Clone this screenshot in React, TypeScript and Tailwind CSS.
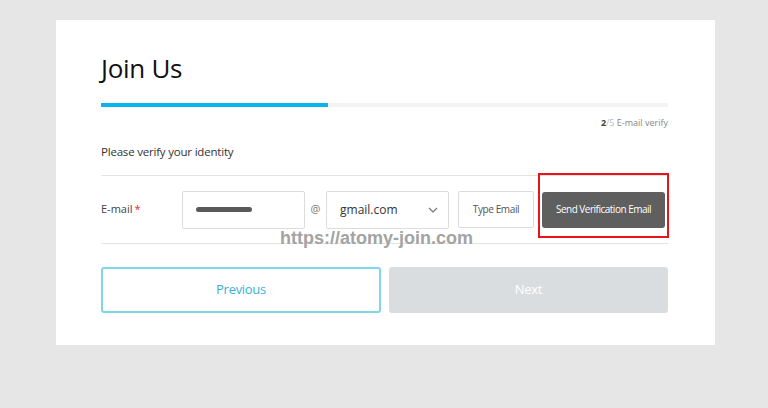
export default function App() {
  return (
    <div className="w-[768px] h-[408px] bg-[#e6e6e6] pt-[20px] pl-[56px] overflow-hidden" style={{ fontFamily: '"Open Sans", "Noto Sans", sans-serif' }}>
      <div className="w-[659px] h-[325px] bg-white pl-[45px] pr-[47px] pt-[30px]">
        <h1 className="text-[26px] leading-[36px] text-[#111] tracking-[-0.3px]">Join Us</h1>

        <div className="mt-[17px] h-[4px] bg-[#f3f3f3] flex">
          <div className="w-[227px] h-full bg-[#0ab4ee]" />
        </div>

        <div className="mt-[10px] text-right text-[9px] leading-[12px] text-[#888]">
          <span className="font-bold text-[#444]">2</span>
          <span className="text-[#bbb]">/5</span> E-mail verify
        </div>

        <p className="mt-[15px] text-[11.5px] leading-[16px] text-[#333] tracking-[-0.2px]">Please verify your identity</p>

        <div className="relative mt-[15px] border-t border-b border-[#e3e3e3] h-[69px] flex items-center">
          <div className="w-[81px] text-[11px] text-[#444]">
            E-mail<span className="text-[#e5262e] ml-[2px]">*</span>
          </div>
          <div className="w-[123px] h-[38px] border border-[#dcdcdc] rounded-[2px] flex items-center pl-[13px]">
            <div className="w-[56px] h-[5px] rounded-full bg-[#5a5a5a]" />
          </div>
          <div className="w-[21px] text-center text-[11px] text-[#777]">@</div>
          <div className="w-[123px] h-[38px] border border-[#dcdcdc] rounded-[2px] flex items-center justify-between pl-[13px] pr-[10px] text-[12px] text-[#333]">
            gmail.com
            <svg width="10" height="6" viewBox="0 0 10 6" fill="none" stroke="#777" strokeWidth="1.2">
              <path d="M1 1l4 4 4-4" />
            </svg>
          </div>
          <div className="ml-[9px] w-[76px] h-[37px] border border-[#dcdcdc] rounded-[2px] flex items-center justify-center text-[10px] text-[#555] tracking-[-0.4px]">
            Type Email
          </div>
          <div className="ml-[8px] w-[123px] h-[36px] rounded-[3px] bg-[#5f5f5f] flex items-center justify-center text-[10px] text-white tracking-[-0.5px]">
            Send Verification Email
          </div>
          <div className="absolute left-[437px] top-[-3px] w-[131px] h-[65px] border-2 border-[#e8141c]" />
          <div
            className="absolute left-[179px] top-[52px] text-[18px] leading-[20px] text-[#a3a3a3] font-semibold"
            style={{ fontFamily: '"Liberation Sans", Arial, sans-serif' }}
          >
            https://atomy-join.com
          </div>
        </div>

        <div className="mt-[23px] flex gap-[8px]">
          <button className="w-[280px] h-[46px] border-2 border-[#7fd6ea] rounded-[3px] text-[13px] text-[#3ab0d6] tracking-[-0.3px]">
            Previous
          </button>
          <button className="w-[279px] h-[46px] rounded-[3px] bg-[#dadddf] text-[13px] text-white tracking-[-0.3px]">
            Next
          </button>
        </div>
      </div>
    </div>
  );
}
